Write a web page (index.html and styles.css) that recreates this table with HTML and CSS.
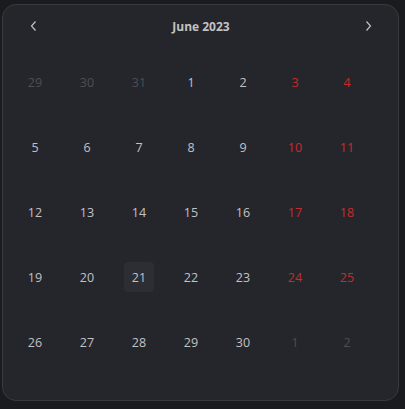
FILE: index.html
```html
<!DOCTYPE html>
<html>
<head>
<meta charset="utf-8">
<link rel="stylesheet" href="styles.css">
</head>
<body>
<div class="card">
  <div class="header">
    <button class="nav" aria-label="Previous month">
      <svg width="10" height="12" viewBox="0 0 10 12"><path d="M6.5 1.5 L2.5 6 L6.5 10.5" fill="none" stroke="#c1c2c5" stroke-width="1.2"/></svg>
    </button>
    <div class="title">June 2023</div>
    <button class="nav" aria-label="Next month">
      <svg width="10" height="12" viewBox="0 0 10 12"><path d="M3.5 1.5 L7.5 6 L3.5 10.5" fill="none" stroke="#c1c2c5" stroke-width="1.2"/></svg>
    </button>
  </div>
  <div class="grid">
    <div class="day out">29</div><div class="day out">30</div><div class="day out">31</div><div class="day">1</div><div class="day">2</div><div class="day we">3</div><div class="day we">4</div>
    <div class="day">5</div><div class="day">6</div><div class="day">7</div><div class="day">8</div><div class="day">9</div><div class="day we">10</div><div class="day we">11</div>
    <div class="day">12</div><div class="day">13</div><div class="day">14</div><div class="day">15</div><div class="day">16</div><div class="day we">17</div><div class="day we">18</div>
    <div class="day">19</div><div class="day">20</div><div class="day hover">21</div><div class="day">22</div><div class="day">23</div><div class="day we">24</div><div class="day we">25</div>
    <div class="day">26</div><div class="day">27</div><div class="day">28</div><div class="day">29</div><div class="day">30</div><div class="day out">1</div><div class="day out">2</div>
  </div>
</div>
</body>
</html>
```
FILE: styles.css
```css
html, body {
  margin: 0;
  padding: 0;
  background: #1a1b1e;
}
body {
  padding: 4px 6px 8px 2px;
  font-family: "Open Sans", "Noto Sans", sans-serif;
}
.card {
  box-sizing: border-box;
  width: 397px;
  height: 397px;
  background: #25262b;
  border: 1px solid #373a40;
  border-radius: 14px;
  padding: 6px 0 0 17px;
}
.header {
  display: flex;
  align-items: center;
  justify-content: space-between;
  height: 30px;
  margin-left: -1px;
  width: 364px;
}
.nav {
  width: 30px;
  height: 30px;
  border: 0;
  background: none;
  padding: 0;
  display: flex;
  align-items: center;
  justify-content: center;
}
.title {
  font-size: 12px;
  font-weight: 700;
  color: #c1c2c5;
}
.grid {
  margin-top: 26px;
  display: grid;
  grid-template-columns: repeat(7, 30px);
  grid-auto-rows: 30px;
  column-gap: 22px;
  row-gap: 35px;
}
.day {
  display: flex;
  align-items: center;
  justify-content: center;
  font-size: 12.5px;
  color: #c1c2c5;
  border-radius: 4px;
}
.day.out { color: #4b4e56; }
.day.we { color: #c92a2a; }
.day.hover { background: #2c2e33; }
```
